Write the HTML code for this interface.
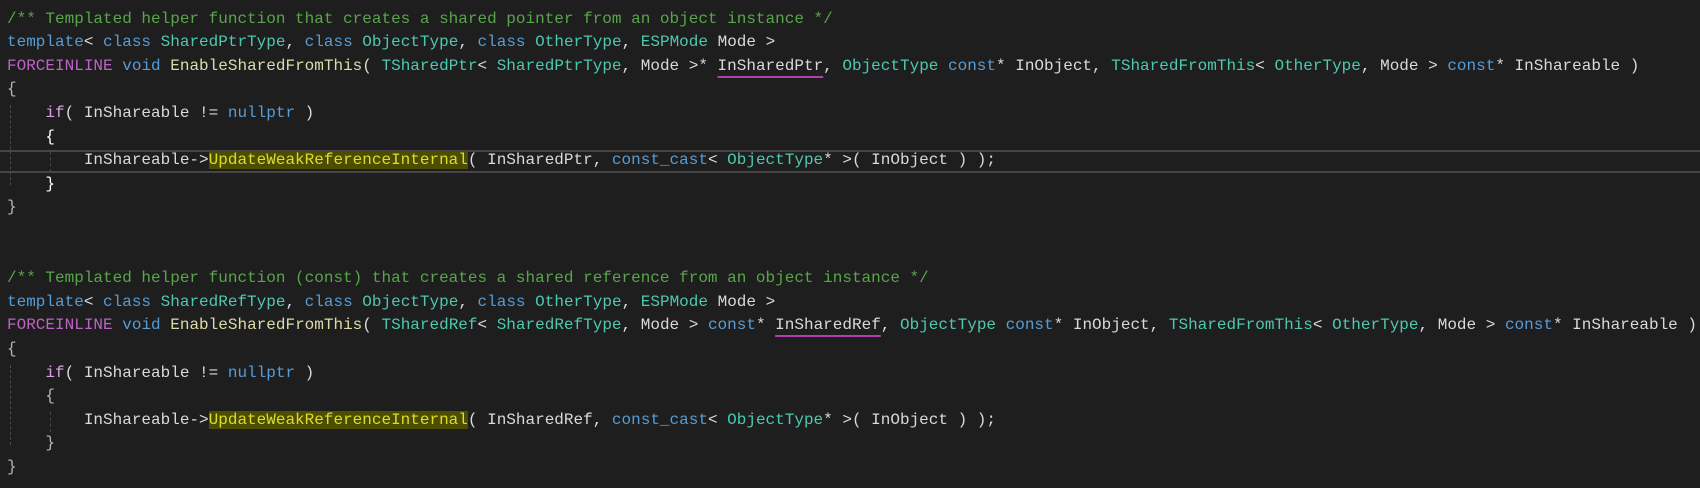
<!DOCTYPE html>
<html><head><meta charset="utf-8"><style>
html,body{margin:0;padding:0;background:#1e1e1e;width:1700px;height:488px;overflow:hidden}
pre{margin:0;position:absolute;left:7px;top:7.7px;font-family:"Liberation Mono",monospace;font-size:16px;line-height:23.6px;color:#dadada;white-space:pre}
.c{color:#57a64a}.k{color:#569cd6}.t{color:#4ec9b0}.m{color:#bd63c5}.f{color:#dcdcaa}.i{color:#d8a0df}.g{color:#b4b4b4}
.h{background:#4d4d00;color:#dcdc30}
.u{text-decoration:underline;text-decoration-color:#b040b0;text-decoration-thickness:2px;text-underline-offset:6px}
.cur{position:absolute;left:0;width:1700px;height:19.6px;border-top:2px solid #464646;border-bottom:2px solid #464646}
.gd{position:absolute;width:0;border-left:1px dashed #4a4a4a}
</style></head><body>
<div class="cur" style="top:149.5px"></div>
<div class="gd" style="left:10px;top:105px;height:80px"></div>
<div class="gd" style="left:50px;top:152px;height:20px"></div>
<div class="gd" style="left:10px;top:365px;height:80px"></div>
<div class="gd" style="left:50px;top:412px;height:20px"></div>
<pre><span class="c">/** Templated helper function that creates a shared pointer from an object instance */</span>
<span class="k">template</span>&lt; <span class="k">class</span> <span class="t">SharedPtrType</span>, <span class="k">class</span> <span class="t">ObjectType</span>, <span class="k">class</span> <span class="t">OtherType</span>, <span class="t">ESPMode</span> Mode &gt;
<span class="m">FORCEINLINE</span> <span class="k">void</span> <span class="f">EnableSharedFromThis</span>( <span class="t">TSharedPtr</span>&lt; <span class="t">SharedPtrType</span>, Mode &gt;* <span class="u">InSharedPtr</span>, <span class="t">ObjectType</span> <span class="k">const</span>* InObject, <span class="t">TSharedFromThis</span>&lt; <span class="t">OtherType</span>, Mode &gt; <span class="k">const</span>* InShareable )
<span class="g">{</span>
    <span class="i">if</span>( InShareable != <span class="k">nullptr</span> )
    <span style="color:#fff">{</span>
        InShareable-&gt;<span class="h">UpdateWeakReferenceInternal</span>( InSharedPtr, <span class="k">const_cast</span>&lt; <span class="t">ObjectType</span>* &gt;( InObject ) );
    <span style="color:#fff">}</span>
<span class="g">}</span>


<span class="c">/** Templated helper function (const) that creates a shared reference from an object instance */</span>
<span class="k">template</span>&lt; <span class="k">class</span> <span class="t">SharedRefType</span>, <span class="k">class</span> <span class="t">ObjectType</span>, <span class="k">class</span> <span class="t">OtherType</span>, <span class="t">ESPMode</span> Mode &gt;
<span class="m">FORCEINLINE</span> <span class="k">void</span> <span class="f">EnableSharedFromThis</span>( <span class="t">TSharedRef</span>&lt; <span class="t">SharedRefType</span>, Mode &gt; <span class="k">const</span>* <span class="u">InSharedRef</span>, <span class="t">ObjectType</span> <span class="k">const</span>* InObject, <span class="t">TSharedFromThis</span>&lt; <span class="t">OtherType</span>, Mode &gt; <span class="k">const</span>* InShareable )
<span class="g">{</span>
    <span class="i">if</span>( InShareable != <span class="k">nullptr</span> )
    <span class="g">{</span>
        InShareable-&gt;<span class="h">UpdateWeakReferenceInternal</span>( InSharedRef, <span class="k">const_cast</span>&lt; <span class="t">ObjectType</span>* &gt;( InObject ) );
    <span class="g">}</span>
<span class="g">}</span></pre>
</body></html>
